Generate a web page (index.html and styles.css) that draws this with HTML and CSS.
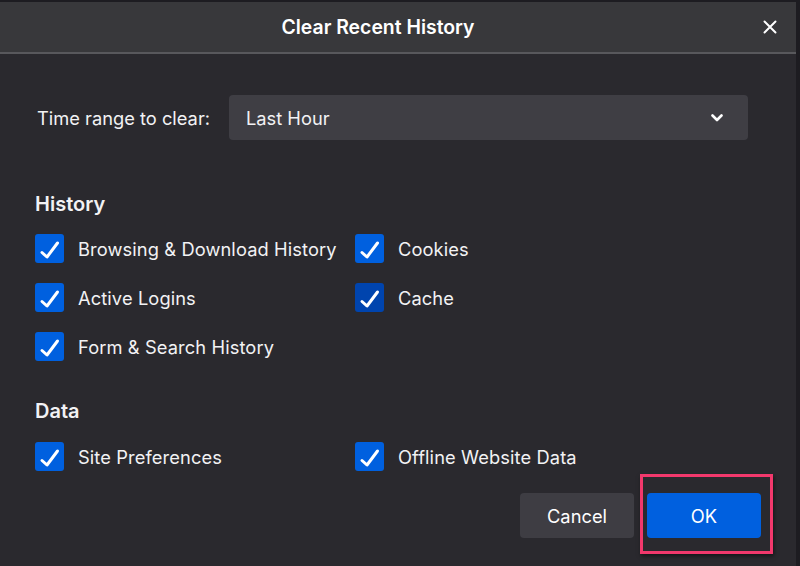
FILE: index.html
```html
<!DOCTYPE html>
<html lang="en">
<head>
	<meta charset="UTF-8">
	<meta name="viewport" content="width=device-width, initial-scale=1.0">
	<title>Clear Recent History</title>
	<link rel="stylesheet" href="styles.css">
</head>
<body>
	<div class="dialog">
		<div class="titlebar">
			<span class="title">Clear Recent History</span>
			<button class="close" aria-label="Close">
				<svg width="14" height="14" viewBox="0 0 14 14"><path d="M1.5 1.5 L12.5 12.5 M12.5 1.5 L1.5 12.5" stroke="#fff" stroke-width="2" stroke-linecap="round"/></svg>
			</button>
		</div>

		<div class="content">
			<div class="range">
				<label class="rangeLabel">Time range to clear:</label>
				<div class="select">
					<span>Last Hour</span>
					<svg width="12" height="8" viewBox="0 0 12 8"><path d="M1.5 1.5 L6 6 L10.5 1.5" fill="none" stroke="#fff" stroke-width="2.6" stroke-linecap="round" stroke-linejoin="round"/></svg>
				</div>
			</div>

			<h2 class="heading headHistory">History</h2>
			<div class="options">
				<label class="option"><span class="box"></span>Browsing &amp; Download History</label>
				<label class="option"><span class="box"></span>Cookies</label>
				<label class="option"><span class="box"></span>Active Logins</label>
				<label class="option"><span class="box dark"></span>Cache</label>
				<label class="option"><span class="box"></span>Form &amp; Search History</label>
			</div>

			<h2 class="heading headData">Data</h2>
			<div class="options">
				<label class="option"><span class="box"></span>Site Preferences</label>
				<label class="option"><span class="box"></span>Offline Website Data</label>
			</div>

			<div class="buttons">
				<button class="btn btnCancel">Cancel</button>
				<span class="marked"><button class="btn btnOk">OK</button></span>
			</div>
		</div>
	</div>
</body>
</html>
```

FILE: styles.css
```css
html, body {
	margin: 0;
	height: 100%;
}
body {
	background-color: #1d1c21;
	font-family: Inter, "Noto Sans", sans-serif;
	color: #f2f2f4;
	overflow: hidden;
}
.dialog {
	margin-top: 2px;
	width: 796px;
	height: 564px;
	background-color: #2a292e;
}
.titlebar {
	position: relative;
	height: 50px;
	display: flex;
	align-items: center;
	justify-content: center;
	background-color: #38383b;
	border-bottom: 2px solid #58585c;
}
.title {
	font-size: 19.4px;
	font-weight: 600;
	color: #fff;
	margin-left: -40px;
}
.close {
	position: absolute;
	right: 19px; top: 18px;
	background: none;
	border: 0;
	padding: 0;
	width: 14px; height: 14px;
	display: flex;
}
.content {
	padding: 41px 48px 0 35px;
}
.range {
	display: flex;
	align-items: center;
}
.rangeLabel {
	font-size: 18.3px;
	margin-left: 2px;
	width: 192px;
}
.select {
	flex: 1;
	height: 45px;
	box-sizing: border-box;
	display: flex;
	align-items: center;
	justify-content: space-between;
	padding: 0 25px 0 17px;
	background-color: #3f3e44;
	border-radius: 4px;
	font-size: 18.3px;
}
.heading {
	margin: 0;
	font-size: 20px;
	font-weight: 600;
	line-height: 24px;
}
.headHistory { margin-top: 52px; }
.headData { margin-top: 38px; }
.options {
	display: grid;
	grid-template-columns: 320px 1fr;
	row-gap: 20px;
	margin-top: 18px;
}
.headData + .options { margin-top: 19px; }
.option {
	display: flex;
	align-items: center;
	height: 29px;
	font-size: 18.3px;
	letter-spacing: 0.1px;
}
.box {
	width: 29px; height: 29px;
	border-radius: 3px;
	margin-right: 14px;
	flex: none;
	background: #0060df url("data:image/svg+xml;utf8,<svg xmlns='http://www.w3.org/2000/svg' width='29' height='29' viewBox='0 0 29 29'><path d='M7 18.5 L12 23 L22.5 9' fill='none' stroke='white' stroke-width='3' stroke-linecap='round' stroke-linejoin='round'/></svg>") no-repeat;
}
.box.dark { background-color: #0044ae; }
.buttons {
	display: flex;
	justify-content: flex-end;
	gap: 13px;
	margin-top: 22px;
	margin-right: -13px;
}
.btn {
	width: 114px; height: 45px;
	border: 0;
	border-radius: 4px;
	font-family: inherit;
	font-size: 18.3px;
	color: #fff;
}
.btnCancel { background-color: #3e3d43; }
.btnOk { background-color: #0060df; }
.marked {
	position: relative;
	display: flex;
}
.marked::after {
	content: "";
	position: absolute;
	left: -7px; right: -12px;
	top: -19px; bottom: -16px;
	border: 3px solid #f2386c;
	box-shadow: 1px 2px 4px rgba(0,0,0,0.5);
}
```
